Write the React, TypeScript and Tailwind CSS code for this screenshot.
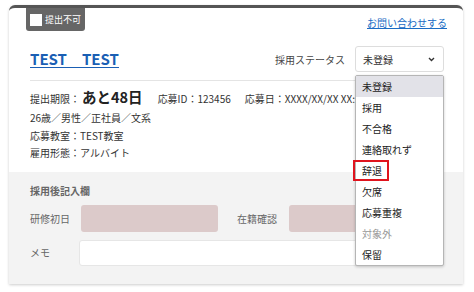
import React from "react";

const statuses = ["未登録", "採用", "不合格", "連絡取れず", "辞退", "欠席", "応募重複", "対象外", "保留"];

export default function App() {
  return (
    <div
      className="relative w-[474px] h-[292px] bg-white overflow-hidden text-[#333]"
      style={{ fontFamily: '"Noto Sans CJK JP", "Noto Sans", sans-serif' }}
    >
      <div className="pt-[5px] pl-[9px]">
        <div className="w-[454px] h-[279px] flex flex-col border-t-[3px] border-[#555] rounded-t-[6px] shadow-[0_1px_3px_rgba(0,0,0,0.2)] bg-white overflow-hidden">
          {/* header */}
          <div className="flex justify-between items-start pl-[17px] pr-[16px]">
            <div className="h-[23px] flex items-center gap-[3px] px-[4px] bg-[#666] rounded-b-[3px]">
              <span className="w-[12px] h-[12px] bg-white" />
              <span className="text-[9px] text-white leading-none">提出不可</span>
            </div>
            <a className="mt-[9px] text-[10px] leading-[12px] text-[#1a6cc4] underline">お問い合わせする</a>
          </div>

          <div className="mt-[15px] flex items-center pl-[21px] pr-[19px]">
            <a className="text-[15px] font-bold text-[#1a5fb4] underline underline-offset-2 leading-[18px]">TEST　TEST</a>
            <span className="ml-auto text-[10px] text-[#444]">採用ステータス</span>
            <div className="ml-[10px] w-[89px] h-[26px] flex items-center justify-between pl-[7px] pr-[8px] border border-[#ddd] rounded-[3px] text-[10px]">
              <span>未登録</span>
              <svg width="7" height="5" viewBox="0 0 7 5">
                <path d="M1 1l2.5 2.5L6 1" fill="none" stroke="#333" strokeWidth="1.4" />
              </svg>
            </div>
          </div>

          <div className="mt-[8px] mx-[21px] h-px bg-[#e4e4e4]" />

          {/* info */}
          <div className="pl-[21px] pt-[7px] pb-[10px] text-[10px] leading-[17.5px]">
            <div className="flex items-baseline h-[21px] whitespace-nowrap">
              <span>提出期限：</span>
              <span className="ml-[2px] text-[14.5px] font-bold text-[#222]">あと48日</span>
              <span className="ml-[15px]">応募ID：123456</span>
              <span className="ml-[14px]">応募日：XXXX/XX/XX XX:XX</span>
            </div>
            <div>26歳／男性／正社員／文系</div>
            <div>応募教室：TEST教室</div>
            <div>雇用形態：アルバイト</div>
          </div>

          {/* after hiring */}
          <div className="flex-1 bg-[#f3f3f3] pl-[21px] pr-[19px] pt-[12px] text-[10px] text-[#666]">
            <div className="font-bold leading-[14px]">採用後記入欄</div>
            <div className="mt-[7px] flex items-center">
              <span className="w-[51px]">研修初日</span>
              <div className="w-[137px] h-[27px] rounded-[3px] bg-[#dccaca]" />
              <span className="ml-[19px] w-[52px]">在籍確認</span>
              <div className="w-[155px] h-[27px] rounded-[3px] bg-[#dccaca]" />
            </div>
            <div className="mt-[8px] flex items-center">
              <span className="w-[49px]">メモ</span>
              <div className="flex-1 h-[26px] rounded-[3px] bg-white border border-[#e6e6e6]" />
            </div>
          </div>
        </div>
      </div>

      {/* open dropdown */}
      <div className="absolute left-[355px] top-[75px] w-[89px] bg-white border border-[#b5b5b5] rounded-[2px] shadow-[0_1px_3px_rgba(0,0,0,0.2)] text-[10px]">
        {statuses.map((s, i) => (
          <div
            key={s}
            className={
              "h-[21px] flex items-center pl-[6px] " +
              (i === 0 ? "bg-[#e2e2e8] " : "") +
              (s === "対象外" ? "text-[#999]" : "text-[#222]")
            }
          >
            {s}
          </div>
        ))}
      </div>
      <div className="absolute left-[353px] top-[160px] w-[36px] h-[21px] border-2 border-[#e0141e]" />
    </div>
  );
}
